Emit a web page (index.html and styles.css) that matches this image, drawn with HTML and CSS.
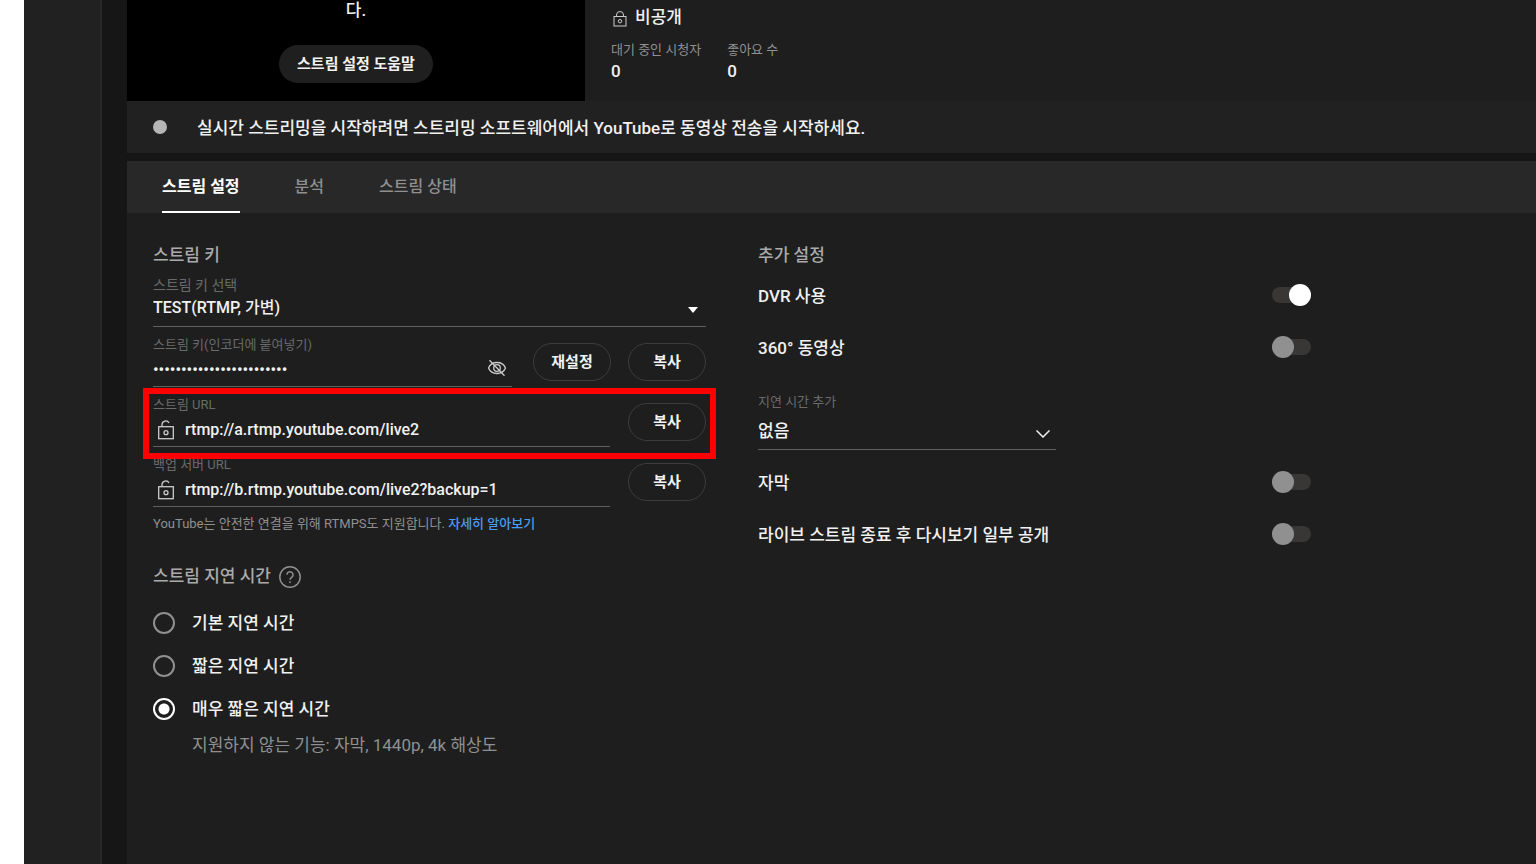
FILE: index.html
```html
<!DOCTYPE html>
<html lang="ko">

<head>
    <meta charset="UTF-8">
    <meta name="viewport" content="width=device-width, initial-scale=1.0">
    <title>스트림 설정</title>
    <link rel="stylesheet" href="styles.css">
</head>

<body>
    <aside class="sidebar"></aside>
    <main class="main">
        <section class="preview">
            <div class="video">
                <p class="video-message">다.</p>
                <button type="button" class="help-button">스트림 설정 도움말</button>
            </div>
            <div class="info">
                <div class="privacy">
                    <svg class="privacy-icon" viewBox="0 0 14 16" fill="none" stroke="currentColor">
                        <rect x="1" y="5.5" width="12" height="9.5" />
                        <path d="M3.5 5.5V4a3.5 3.5 0 0 1 7 0v1.5" />
                        <circle cx="7" cy="10.2" r="1.7" />
                    </svg>
                    <span>비공개</span>
                </div>
                <dl class="stats">
                    <div>
                        <dt>대기 중인 시청자</dt>
                        <dd>0</dd>
                    </div>
                    <div>
                        <dt>좋아요 수</dt>
                        <dd>0</dd>
                    </div>
                </dl>
            </div>
        </section>

        <div class="status">
            <span class="status-dot"></span>
            <p>실시간 스트리밍을 시작하려면 스트리밍 소프트웨어에서 YouTube로 동영상 전송을 시작하세요.</p>
        </div>

        <nav class="tabs">
            <button type="button" class="tab active">스트림 설정</button>
            <button type="button" class="tab">분석</button>
            <button type="button" class="tab">스트림 상태</button>
        </nav>

        <form class="panel">
            <div class="column">
                <h2>스트림 키</h2>
                <div class="fields">
                    <div class="row">
                        <div class="field select-field key-select">
                            <label for="streamKey">스트림 키 선택</label>
                            <select id="streamKey">
                                <option>TEST(RTMP, 가변)</option>
                            </select>
                            <svg class="caret" viewBox="0 0 10 6" fill="currentColor">
                                <path d="M0 0h10L5 6z" />
                            </svg>
                        </div>
                    </div>
                    <div class="row key-row">
                        <div class="field">
                            <label for="keyValue">스트림 키(인코더에 붙여넣기)</label>
                            <div class="control">
                                <input type="password" id="keyValue" value="abcdefghijklmnopqrstuvwx" readonly>
                                <button type="button" class="eye-button" aria-label="스트림 키 표시">
                                    <svg viewBox="0 0 20 18" fill="none" stroke="currentColor" stroke-width="1.3">
                                        <path d="M1.5 9C3 5.5 6.2 3.5 10 3.5S17 5.5 18.5 9C17 12.5 13.8 14.5 10 14.500S3 12.5 1.5 9z" />
                                        <circle cx="10" cy="9" r="3.3" />
                                        <path d="M2.5 1.2l15 15.6" />
                                    </svg>
                                </button>
                            </div>
                        </div>
                        <div class="buttons">
                            <button type="button" class="pill">재설정</button>
                            <button type="button" class="pill">복사</button>
                        </div>
                    </div>
                    <div class="row highlight">
                        <div class="field">
                            <label for="streamUrl">스트림 URL</label>
                            <div class="control">
                                <svg class="lock" viewBox="0 0 16 20" fill="none" stroke="currentColor" stroke-width="1.3">
                                    <rect x="0.7" y="6.7" width="14.6" height="12" />
                                    <path d="M4 6.7V4.5a3.7 3.7 0 0 1 7-1.5" />
                                    <circle cx="8" cy="12.7" r="2" />
                                </svg>
                                <input type="text" id="streamUrl" value="rtmp://a.rtmp.youtube.com/live2" readonly>
                            </div>
                        </div>
                        <div class="buttons">
                            <button type="button" class="pill">복사</button>
                        </div>
                    </div>
                    <div class="row">
                        <div class="field">
                            <label for="backupUrl">백업 서버 URL</label>
                            <div class="control">
                                <svg class="lock" viewBox="0 0 16 20" fill="none" stroke="currentColor" stroke-width="1.3">
                                    <rect x="0.7" y="6.7" width="14.6" height="12" />
                                    <path d="M4 6.7V4.5a3.7 3.7 0 0 1 7-1.5" />
                                    <circle cx="8" cy="12.7" r="2" />
                                </svg>
                                <input type="text" id="backupUrl" value="rtmp://b.rtmp.youtube.com/live2?backup=1" readonly>
                            </div>
                        </div>
                        <div class="buttons">
                            <button type="button" class="pill">복사</button>
                        </div>
                    </div>
                </div>
                <p class="note">YouTube는 안전한 연결을 위해 RTMPS도 지원합니다. <a href="#">자세히 알아보기</a></p>

                <div class="latency-title">
                    <h2>스트림 지연 시간</h2>
                    <svg class="help-icon" viewBox="0 0 22 22" fill="none" stroke="currentColor" stroke-width="1.5">
                        <circle cx="11" cy="11" r="10.2" />
                        <path d="M8 8.8a3 3 0 1 1 4.6 2.5c-1 .7-1.6 1.2-1.6 2.500" />
                        <path d="M11 15.200v1.8" />
                    </svg>
                </div>
                <div class="radios">
                    <label><input type="radio" name="latency"> 기본 지연 시간</label>
                    <label><input type="radio" name="latency"> 짧은 지연 시간</label>
                    <label><input type="radio" name="latency" checked> 매우 짧은 지연 시간</label>
                </div>
                <p class="radio-hint">지원하지 않는 기능: 자막, 1440p, 4k 해상도</p>
            </div>

            <div class="column">
                <h2>추가 설정</h2>
                <div class="toggles">
                    <label>DVR 사용 <input type="checkbox" checked></label>
                    <label>360° 동영상 <input type="checkbox"></label>
                </div>
                <div class="field select-field delay">
                    <label for="delay">지연 시간 추가</label>
                    <select id="delay">
                        <option>없음</option>
                    </select>
                    <svg class="chevron" viewBox="0 0 14 8" fill="none" stroke="currentColor" stroke-width="1.5">
                        <path d="M.5 .5L7 7l6.500-6.500" />
                    </svg>
                </div>
                <div class="toggles">
                    <label>자막 <input type="checkbox"></label>
                    <label>라이브 스트림 종료 후 다시보기 일부 공개 <input type="checkbox"></label>
                </div>
            </div>
        </form>
    </main>
</body>

</html>
```
FILE: styles.css
```css
* {
    box-sizing: border-box;
}

body {
    margin: 0;
    padding-left: 24px;
    display: flex;
    min-height: 100vh;
    background-color: #fff;
    color: #f1f1f1;
    font-family: Roboto, "Noto Sans CJK KR", sans-serif;
    font-size: 17px;
    font-weight: 500;
    line-height: 24px;
}

h2,
p,
dl,
dd {
    margin: 0;
}

button,
input,
select {
    font-family: inherit;
    color: inherit;
    margin: 0;
}

button {
    padding: 0;
    border: none;
    background: none;
    cursor: pointer;
}

.sidebar {
    width: 78px;
    flex-shrink: 0;
    background-color: #212121;
    border-right: 2px solid #272727;
}

.main {
    flex: 1;
    min-width: 0;
    display: flex;
    flex-direction: column;
    padding-left: 25px;
    background-color: #161616;
}

/* Preview */
.preview {
    display: flex;
    background-color: #1e1e1e;
}

.video {
    width: 458px;
    display: flex;
    flex-direction: column;
    align-items: center;
    gap: 25px;
    padding-bottom: 18px;
    background-color: #000;
}

.video-message {
    line-height: 20px;
}

.help-button {
    height: 38px;
    padding: 0 18px 3px;
    border-radius: 19px;
    background-color: #1f1f1f;
    font-size: 15px;
    font-weight: bold;
}

.info {
    padding: 5px 26px 0;
}

.privacy {
    display: flex;
    align-items: center;
    gap: 8px;
}

.privacy-icon {
    width: 14px;
    height: 16px;
    margin: 4px 0 0 2px;
    color: #ccc;
}

.stats {
    display: flex;
    gap: 26px;
    margin-top: 12px;
}

.stats dt {
    font-size: 13px;
    font-weight: normal;
    line-height: 18px;
    color: #909090;
}

.status {
    display: flex;
    align-items: center;
    gap: 30px;
    height: 52px;
    padding: 0 26px;
    background-color: #212121;
}

.status p {
    padding-top: 2px;
}

.status-dot {
    width: 14px;
    height: 14px;
    border-radius: 50%;
    background-color: #b5b5b5;
}

/* Tabs */
.tabs {
    display: flex;
    gap: 55px;
    height: 52px;
    margin-top: 8px;
    padding: 0 35px;
    background-color: #282828;
}

.tab {
    padding-bottom: 3px;
    border-bottom: 2px solid transparent;
    font-size: 16px;
    font-weight: 500;
    color: #909090;
}

.tab.active {
    border-color: #fff;
    color: #fff;
    font-weight: bold;
}

/* Settings */
.panel {
    flex: 1;
    display: grid;
    grid-template-columns: repeat(2, minmax(0, 553px));
    gap: 52px;
    padding: 30px 26px;
    background-color: #1e1e1e;
}

h2 {
    font-size: 17px;
    font-weight: 500;
    color: #aaa;
}

.fields {
    display: flex;
    flex-direction: column;
    gap: 10px;
    margin-top: 10px;
}

.row {
    position: relative;
    display: flex;
    gap: 18px;
}

.key-row {
    gap: 21px;
}

.highlight::after {
    content: "";
    position: absolute;
    inset: -9px -10px -12px;
    border: 6px solid #f00;
    pointer-events: none;
}

.field {
    flex: 1;
    min-width: 0;
    height: 50px;
    display: flex;
    flex-direction: column;
    border-bottom: 1px solid #606060;
}

.field label {
    font-size: 13px;
    font-weight: normal;
    line-height: 16px;
    color: #6a6a6a;
}

.select-field {
    position: relative;
}

.field select {
    flex: 1;
    width: 100%;
    padding: 0;
    border: none;
    outline: none;
    appearance: none;
    background: transparent;
    font-size: 17px;
    font-weight: 500;
}

.key-select label {
    font-size: 14px;
}

.key-select select {
    padding-bottom: 5px;
    font-size: 16px;
}

.caret {
    position: absolute;
    right: 8px;
    bottom: 13px;
    width: 10px;
    height: 6px;
    color: #fff;
}

.chevron {
    position: absolute;
    right: 6px;
    bottom: 11px;
    width: 14px;
    height: 8px;
}

.control {
    flex: 1;
    display: flex;
    align-items: center;
}

.control input {
    flex: 1;
    min-width: 0;
    padding: 0;
    border: none;
    outline: none;
    background: transparent;
    font-size: 16px;
    font-weight: 500;
}

.lock {
    width: 16px;
    height: 20px;
    margin: 0 11px 0 5px;
    color: #ccc;
}

.eye-button {
    width: 20px;
    height: 18px;
    margin: 0 5px 4px 0;
    color: #ccc;
}

.eye-button svg {
    display: block;
}

.buttons {
    display: flex;
    gap: 17px;
    padding-top: 6px;
}

.pill {
    width: 78px;
    height: 38px;
    padding-bottom: 3px;
    border: 1px solid #3c3c3c;
    border-radius: 19px;
    font-size: 15px;
    font-weight: bold;
}

.note {
    margin-top: 8px;
    font-size: 13px;
    font-weight: normal;
    line-height: 18px;
    color: #909090;
}

.note a {
    color: #4a9cf0;
    font-weight: 500;
    text-decoration: none;
}

.latency-title {
    display: flex;
    align-items: center;
    gap: 8px;
    margin-top: 31px;
}

.help-icon {
    width: 22px;
    height: 22px;
    margin-top: 2px;
    color: #909090;
}

.radios {
    display: flex;
    flex-direction: column;
    gap: 19px;
    margin-top: 23px;
}

.radios label {
    display: flex;
    align-items: center;
    gap: 17px;
}

.radios input {
    appearance: none;
    width: 22px;
    height: 22px;
    border: 2px solid #909090;
    border-radius: 50%;
}

.radios input:checked {
    border-color: #fff;
    background: radial-gradient(circle, #fff 5px, transparent 6px);
}

.radio-hint {
    margin: 12px 0 0 39px;
    font-weight: normal;
    color: #909090;
}

/* Extra settings */
.toggles {
    display: flex;
    flex-direction: column;
    gap: 28px;
    margin-top: 17px;
}

.toggles label {
    display: flex;
    align-items: center;
    justify-content: space-between;
}

.toggles input {
    appearance: none;
    position: relative;
    width: 39px;
    height: 16px;
    margin-bottom: 2px;
    border-radius: 8px;
    background-color: #383735;
}

.toggles input::before {
    content: "";
    position: absolute;
    top: -3px;
    left: 0;
    width: 22px;
    height: 22px;
    border-radius: 50%;
    background-color: #909090;
}

.toggles input:checked::before {
    left: auto;
    right: 0;
    background-color: #fff;
}

.delay {
    width: 298px;
    height: 56px;
    margin: 34px 0 21px;
}

.delay select {
    padding-top: 3px;
}
```
